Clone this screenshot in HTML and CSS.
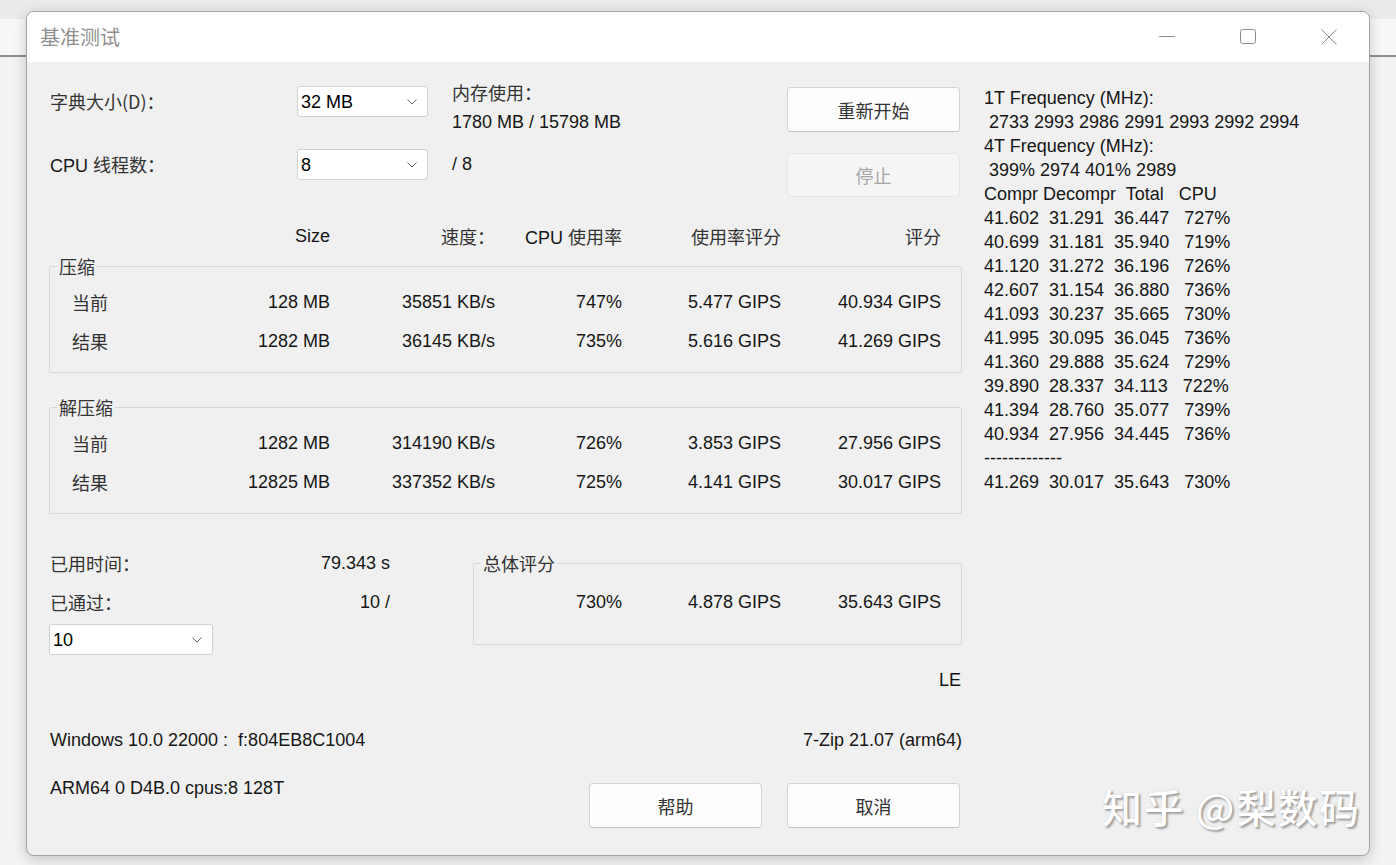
FILE: index.html
```html
<!DOCTYPE html>
<html lang="zh-CN">
<head>
<meta charset="utf-8">
<title>基准测试</title>
<link rel="stylesheet" href="styles.css">
</head>
<body>
<div class="window">
  <div class="titlebar">
    <div class="title">基准测试</div>
    <div class="caption">
      <div class="cap-btn"><svg width="16" height="16" viewBox="0 0 16 16"><line x1="0" y1="7.5" x2="16" y2="7.5"/></svg></div>
      <div class="cap-btn"><svg width="16" height="16" viewBox="0 0 16 16"><rect x="0.5" y="0.5" width="15" height="14" rx="2"/></svg></div>
      <div class="cap-btn"><svg width="16" height="16" viewBox="0 0 16 16"><path d="M0.5 0.5 L15.5 15.5 M15.5 0.5 L0.5 15.5"/></svg></div>
    </div>
  </div>
  <div class="content">
    <div class="main">
      <div class="top">
        <div class="row r1">
          <div class="lbl zh">字典大小(D)：</div>
          <div class="combo"><span>32 MB</span><svg class="chev" width="10" height="6" viewBox="0 0 10 6"><polyline points="0.5,0.5 5,5 9.5,0.5"/></svg></div>
          <div class="mem"><div class="zh">内存使用：</div><div>1780 MB / 15798 MB</div></div>
          <button class="btn">重新开始</button>
        </div>
        <div class="row r2">
          <div class="lbl">CPU <span class="zh">线程数：</span></div>
          <div class="combo"><span>8</span><svg class="chev" width="10" height="6" viewBox="0 0 10 6"><polyline points="0.5,0.5 5,5 9.5,0.5"/></svg></div>
          <div class="threads">/ 8</div>
          <button class="btn disabled">停止</button>
        </div>
      </div>

      <div class="cols head">
        <div></div>
        <div>Size</div>
        <div class="zh">速度：</div>
        <div>CPU <span class="zh">使用率</span></div>
        <div class="zh">使用率评分</div>
        <div class="zh">评分</div>
      </div>

      <fieldset class="group g1">
        <legend class="zh">压缩</legend>
        <div class="cols in">
          <div class="name zh">当前</div><div>128 MB</div><div>35851 KB/s</div><div>747%</div><div>5.477 GIPS</div><div>40.934 GIPS</div>
        </div>
        <div class="cols in">
          <div class="name zh">结果</div><div>1282 MB</div><div>36145 KB/s</div><div>735%</div><div>5.616 GIPS</div><div>41.269 GIPS</div>
        </div>
      </fieldset>

      <fieldset class="group g2">
        <legend class="zh">解压缩</legend>
        <div class="cols in">
          <div class="name zh">当前</div><div>1282 MB</div><div>314190 KB/s</div><div>726%</div><div>3.853 GIPS</div><div>27.956 GIPS</div>
        </div>
        <div class="cols in">
          <div class="name zh">结果</div><div>12825 MB</div><div>337352 KB/s</div><div>725%</div><div>4.141 GIPS</div><div>30.017 GIPS</div>
        </div>
      </fieldset>

      <div class="bottom">
        <div class="stats">
          <div class="stat"><span class="zh">已用时间：</span><span>79.343 s</span></div>
          <div class="stat"><span class="zh">已通过：</span><span>10 /</span></div>
          <div class="combo small"><span>10</span><svg class="chev" width="10" height="6" viewBox="0 0 10 6"><polyline points="0.5,0.5 5,5 9.5,0.5"/></svg></div>
        </div>
        <fieldset class="group overall">
          <legend class="zh">总体评分</legend>
          <div class="cols3">
            <div>730%</div><div>4.878 GIPS</div><div>35.643 GIPS</div>
          </div>
        </fieldset>
      </div>

      <div class="le">LE</div>

      <div class="sysrow">
        <span class="pre">Windows 10.0 22000 :  f:804EB8C1004</span>
        <span>7-Zip 21.07 (arm64)</span>
      </div>

      <div class="lastrow">
        <span>ARM64 0 D4B.0 cpus:8 128T</span>
        <div class="btns">
          <button class="btn">帮助</button>
          <button class="btn">取消</button>
        </div>
      </div>
    </div>

    <div class="log">1T Frequency (MHz):
 2733 2993 2986 2991 2993 2992 2994
4T Frequency (MHz):
 399% 2974 401% 2989
Compr Decompr  Total   CPU
41.602  31.291  36.447   727%
40.699  31.181  35.940   719%
41.120  31.272  36.196   726%
42.607  31.154  36.880   736%
41.093  30.237  35.665   730%
41.995  30.095  36.045   736%
41.360  29.888  35.624   729%
39.890  28.337  34.113   722%
41.394  28.760  35.077   739%
40.934  27.956  34.445   736%
-------------
41.269  30.017  35.643   730%</div>
  </div>

  <div class="watermark">知乎 @梨数码</div>
</div>
</body>
</html>
```

FILE: styles.css
```css
* { box-sizing: border-box; }
html, body { margin: 0; }
body {
  width: 1396px;
  height: 865px;
  overflow: hidden;
  padding: 11px 0 0 26px;
  font-family: "Liberation Sans", "Noto Sans CJK SC", sans-serif;
  font-size: 18px;
  color: #161616;
  background: linear-gradient(to bottom,
    #ebebeb 0, #ebebeb 19px,
    #f8f8f8 19px, #f8f8f8 55px,
    #8f8f8f 55px, #8f8f8f 57px,
    #f3f3f3 57px);
}
.zh { font-family: "Noto Sans CJK SC", sans-serif; color: #333; }

.window {
  position: relative;
  width: 1344px;
  height: 845px;
  border: 1px solid #a3a3a3;
  border-radius: 8px;
  background: #f0f0f0;
  box-shadow: 0 3px 14px rgba(0, 0, 0, 0.2);
  overflow: hidden;
  display: flex;
  flex-direction: column;
}
.titlebar {
  flex: none;
  height: 50px;
  background: #fff;
  display: flex;
  align-items: center;
  justify-content: space-between;
}
.title {
  padding-left: 13px;
  font-family: "Noto Sans CJK SC", sans-serif;
  font-size: 20px;
  line-height: 50px;
  color: #8f8f8f;
}
.caption { display: flex; height: 50px; }
.cap-btn {
  width: 81px;
  display: flex;
  align-items: center;
  justify-content: center;
}
.cap-btn svg { stroke: #8a8a8a; fill: none; stroke-width: 1; }

.content {
  flex: 1;
  display: flex;
  gap: 23px;
  padding: 24px 0 0 22px;
}
.main { width: 913px; flex: none; display: flex; flex-direction: column; }

/* top area */
.row {
  display: grid;
  grid-template-columns: 248px 131px 359px 173px;
  align-items: start;
}
.r1 { height: 46px; }
.r2 { height: 48px; margin-top: 17px; }
.lbl { line-height: 31px; height: 31px; padding-left: 1px; }
.mem { padding-left: 24px; margin-top: -9px; line-height: 30px; }
.threads { padding-left: 24px; line-height: 31px; }

.combo {
  width: 131px;
  height: 31px;
  background: #fff;
  border: 1px solid #d2d2d2;
  border-radius: 3px;
  display: flex;
  align-items: center;
  justify-content: space-between;
  padding: 1px 10px 0 3px;
  line-height: 29px;
  color: #000;
}
.chev { fill: none; stroke: #666; stroke-width: 1; }
.combo.small { width: 164px; margin-top: 2px; }

.btn {
  width: 173px;
  height: 45px;
  margin: 0;
  padding: 0;
  background: #fdfdfd;
  border: 1px solid #d3d3d3;
  border-bottom-color: #c4c4c4;
  border-radius: 4px;
  font-family: "Noto Sans CJK SC", sans-serif;
  font-size: 18px;
  color: #333;
}
.r1 .btn { margin-top: 1px; }
.r2 .btn { margin-top: 4px; height: 44px; }
.btn.disabled {
  background: #f5f5f5;
  border-color: #e6e6e6;
  color: #a6a6a6;
}

/* table */
.cols {
  display: grid;
  grid-template-columns: 181px 100px 165px 127px 159px 160px;
  text-align: right;
}
.head { margin-top: 27px; line-height: 24px; height: 24px; }
.head > div { height: 24px; }
.cols.in { grid-template-columns: 180px 100px 165px 127px 159px 160px; line-height: 39px; height: 39px; }
.cols .name { text-align: left; padding-left: 22px; }

.group {
  margin: 0;
  min-width: 0;
  border: 1px solid #d8d8d8;
  border-radius: 2px;
  padding: 7px 20px 11px 0;
}
.group legend {
  margin-left: 7px;
  padding: 0 2px;
  line-height: 20px;
  height: 20px;
  font-size: 18px;
}
.g1 { margin-top: 8px; }
.g2 { margin-top: 24px; }

/* bottom */
.bottom { display: flex; gap: 83px; margin-top: 30px; align-items: flex-start; }
.stats { width: 341px; }
.stat { display: flex; justify-content: space-between; line-height: 39px; height: 39px; padding-left: 1px; }
.overall { width: 489px; margin-top: 9px; padding: 10px 20px 22px 0; }
.cols3 {
  display: grid;
  grid-template-columns: 148px 159px 160px;
  text-align: right;
  line-height: 39px;
}

.le { margin-top: 13px; line-height: 24px; text-align: right; padding-right: 1px; }
.sysrow {
  margin-top: 36px;
  line-height: 24px;
  display: flex;
  justify-content: space-between;
  padding-left: 1px;
}
.pre { white-space: pre; }
.lastrow {
  margin-top: 24px;
  display: flex;
  justify-content: space-between;
  align-items: flex-start;
  line-height: 24px;
  padding-left: 1px;
}
.btns { display: flex; gap: 25px; margin-top: 7px; margin-right: 2px; }

/* right log */
.log {
  white-space: pre;
  line-height: 24px;
  color: #161616;
  margin-left: -1px;
}

.watermark {
  position: absolute;
  left: 1075px;
  top: 770px;
  font-family: "Noto Sans CJK SC", sans-serif;
  font-size: 40px;
  font-weight: 500;
  line-height: 48px;
  letter-spacing: 1.5px;
  color: #fff;
  text-shadow: 2px 2px 2px rgba(0, 0, 0, 0.32), 0 0 1px rgba(0, 0, 0, 0.25);
}
```
